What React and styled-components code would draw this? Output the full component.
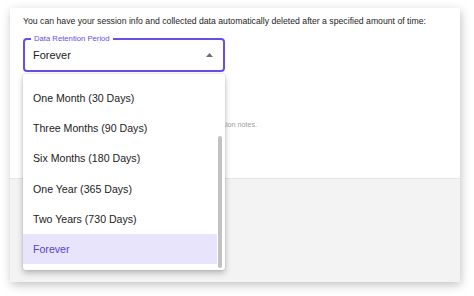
import React from "react";
import styled, { createGlobalStyle } from "styled-components";

const GlobalStyle = createGlobalStyle`
  html, body {
    margin: 0;
    padding: 0;
    background: #ffffff;
    font-family: "Liberation Sans", Arial, sans-serif;
  }
`;

const Page = styled.div`
  width: 474px;
  height: 296px;
  padding: 8px 14px 14px 10px;
  box-sizing: border-box;
`;

const Card = styled.div`
  width: 450px;
  height: 274px;
  background: #fff;
  box-shadow: 1px 3px 9px rgba(0, 0, 0, 0.24);
  display: flex;
  flex-direction: column;
`;

const Body = styled.div`
  flex: 0 0 170px;
  padding: 7px 13px 0 13px;
  box-sizing: border-box;
  position: relative;
`;

const Intro = styled.p`
  margin: 0;
  font-size: 8.7px;
  line-height: 12px;
  color: #1e1e1e;
  white-space: nowrap;
`;

const Field = styled.div`
  position: relative;
  margin-top: 11px;
  width: 202px;
  height: 34px;
  box-sizing: border-box;
  border: 2px solid #6a4de6;
  border-radius: 4px;
  display: flex;
  align-items: center;
  justify-content: space-between;
  padding: 0 10px 0 8px;
`;

const Label = styled.span`
  position: absolute;
  top: -6px;
  left: 6px;
  padding: 0 3px;
  background: #fff;
  font-size: 7.7px;
  line-height: 10px;
  color: #6a4de6;
`;

const Value = styled.span`
  font-size: 11px;
  color: #222;
`;

const Helper = styled.p`
  margin: 48px 0 0 0;
  font-size: 7.2px;
  color: #a0a0a0;
  white-space: nowrap;
`;

const Menu = styled.div`
  position: absolute;
  top: 66px;
  left: 13px;
  width: 202px;
  height: 196px;
  background: #fff;
  border-radius: 3px;
  box-shadow: 0 3px 6px rgba(0, 0, 0, 0.25), 0 0 2px rgba(0, 0, 0, 0.15);
  overflow: hidden;
  z-index: 2;
  display: flex;
  flex-direction: column;
  padding-top: 9px;
  box-sizing: border-box;
`;

const Option = styled.div`
  height: 30.2px;
  flex: 0 0 30.2px;
  width: 194px;
  display: flex;
  align-items: center;
  padding-left: 10px;
  box-sizing: border-box;
  font-size: 10.6px;
  color: ${(p) => (p.selected ? "#5b3fd6" : "#222")};
  background: ${(p) => (p.selected ? "#e8e4fb" : "transparent")};
`;

const Thumb = styled.div`
  position: absolute;
  right: 3px;
  top: 62px;
  width: 4px;
  height: 132px;
  border-radius: 2px;
  background: #c2c2c2;
`;

const Footer = styled.div`
  flex: 1;
  background: #f3f3f3;
  border-top: 1px solid #e6e6e6;
`;

const options = [
  "One Month (30 Days)",
  "Three Months (90 Days)",
  "Six Months (180 Days)",
  "One Year (365 Days)",
  "Two Years (730 Days)",
  "Forever",
];

export default function App() {
  return (
    <>
      <GlobalStyle />
      <Page>
        <Card>
          <Body>
            <Intro>
              You can have your session info and collected data automatically
              deleted after a specified amount of time:
            </Intro>
            <Field>
              <Label>Data Retention Period</Label>
              <Value>Forever</Value>
              <svg width="7" height="4" viewBox="0 0 7 4">
                <path d="M0 4 L3.5 0 L7 4 Z" fill="#6e6e6e" />
              </svg>
            </Field>
            <Helper>
              Deleting old sessions will also remove their transcripts and
              session notes.
            </Helper>
            <Menu>
              {options.map((o) => (
                <Option key={o} selected={o === "Forever"}>
                  {o}
                </Option>
              ))}
              <Thumb />
            </Menu>
          </Body>
          <Footer />
        </Card>
      </Page>
    </>
  );
}
